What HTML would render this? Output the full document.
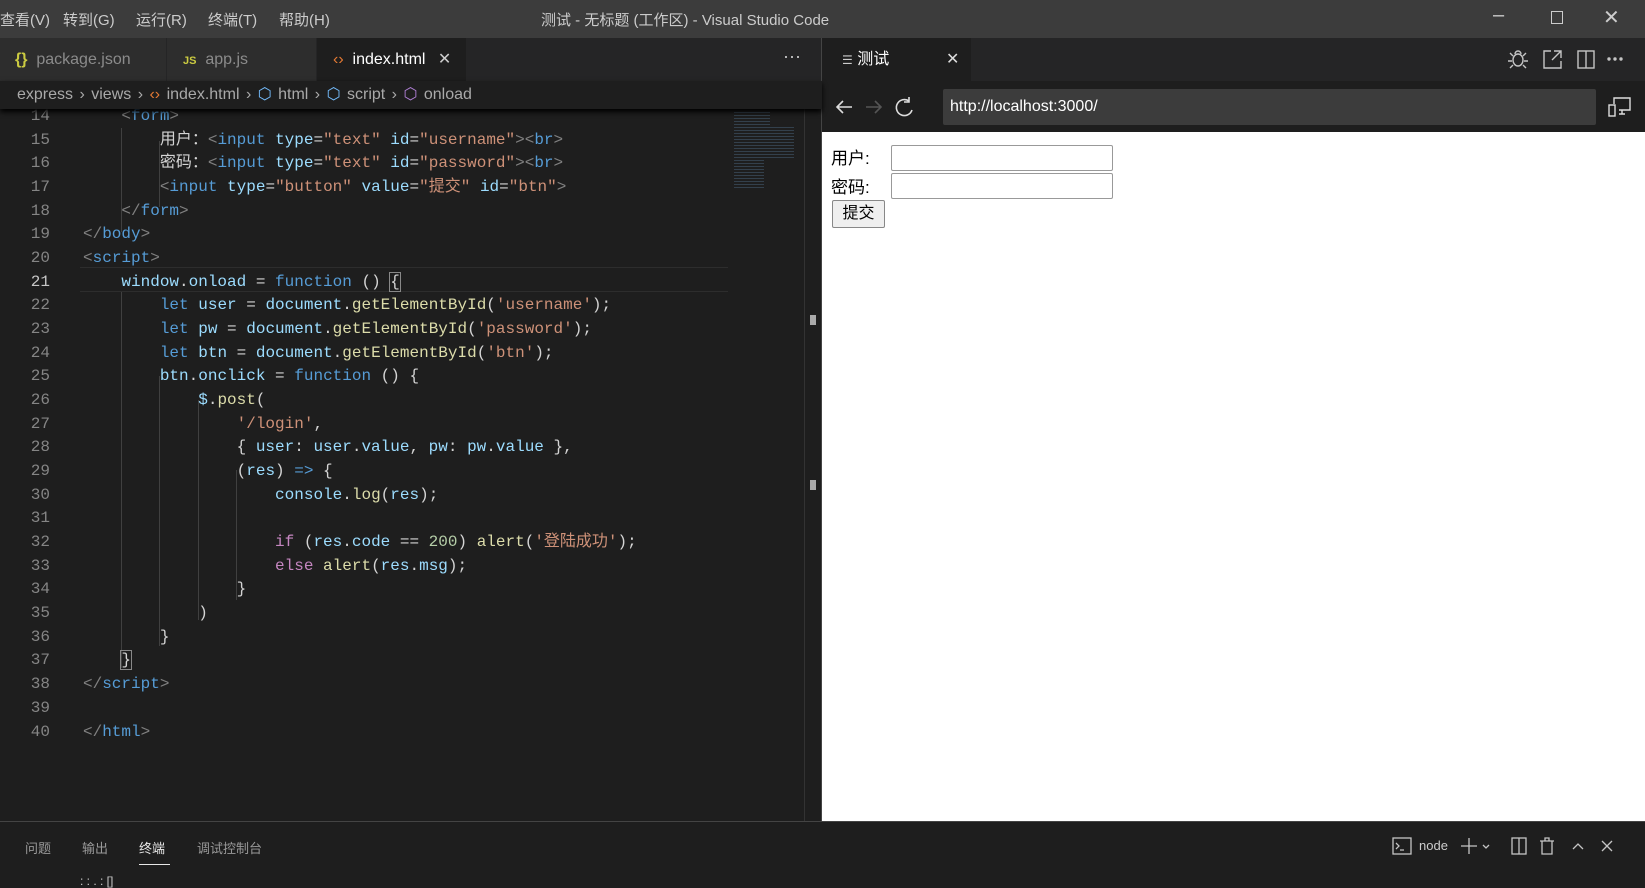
<!DOCTYPE html>
<html><head><meta charset="utf-8"><style>
*{margin:0;padding:0;box-sizing:border-box}
body{width:1645px;height:885px;overflow:hidden;background:#1e1e1e;font-family:"Liberation Sans","Noto Sans CJK SC",sans-serif;color:#ccc;position:relative}
.a{position:absolute}
#title{left:0;top:0;width:1645px;height:38px;background:#3c3c3c;font-size:15px;color:#ccc}
#title span{position:absolute;top:9px}
#tabs{left:0;top:38px;width:822px;height:43px;background:#252526}
.tab{position:absolute;top:0;height:43px;font-size:16px;line-height:43px}
#crumb{left:0;top:81px;width:822px;height:28px;background:#1e1e1e;font-size:16px;color:#a9a9a9;line-height:28px;box-shadow:0 3px 5px #000;z-index:2;word-spacing:2px}
.ln{position:absolute;width:50px;text-align:right;left:0;font-family:"Liberation Mono",monospace;font-size:16px;color:#858585;height:24px;line-height:24px}
.cl{position:absolute;left:83px;font-family:"Liberation Mono","Noto Sans CJK SC",monospace;font-size:16px;white-space:pre;color:#d4d4d4;height:24px;line-height:24px}
.t{color:#808080}.n{color:#569cd6}.at{color:#9cdcfe}.s{color:#ce9178}.f{color:#dcdcaa}.v{color:#9cdcfe}.k{color:#569cd6}.w{color:#d4d4d4}.nm{color:#b5cea8}
.g{position:absolute;width:1px;background:#404040}
</style></head><body>
<div id="title" class="a">
<span style="left:0">查看(V)</span><span style="left:63px">转到(G)</span><span style="left:136px">运行(R)</span><span style="left:208px">终端(T)</span><span style="left:279px">帮助(H)</span>
<span style="left:541px">测试 - 无标题 (工作区) - Visual Studio Code</span>
<span style="left:1493px;top:4px;font-size:20px">–</span>
<span style="left:1551px;top:11px;width:12px;height:13px;border:1.3px solid #ccc"></span>
<span style="left:1603px;top:5px;font-size:20px">✕</span>
</div>
<div id="tabs" class="a">
<div class="tab" style="left:0;width:166px;background:#2d2d2d;color:#8b8b8b"><span style="color:#cbcb41;margin-left:15px;font-weight:bold">{}</span>&nbsp; package.json</div>
<div class="tab" style="left:167px;width:149px;background:#2d2d2d;color:#8b8b8b"><span style="color:#cbcb41;margin-left:16px;font-size:11px;font-weight:bold">JS</span>&nbsp; app.js</div>
<div class="tab" style="left:317px;width:149px;background:#1e1e1e;color:#fff"><span style="color:#e37933;margin-left:16px">‹›</span>&nbsp; index.html <span style="margin-left:8px;color:#ccc">✕</span></div>
<div class="tab" style="left:783px;color:#ccc;font-size:18px;line-height:36px">···</div>
</div>
<div id="crumb" class="a"><span style="margin-left:17px">express › views › <span style="color:#e37933">‹›</span> index.html › <span style="color:#75beff">⬡</span> html › <span style="color:#75beff">⬡</span> script › <span style="color:#b180d7">⬡</span> onload</span></div>
<div class="a" style="left:0;top:109px;width:822px;height:712px;overflow:hidden">
<div style="position:absolute;top:-109px;left:0;width:822px;height:821px">
<div class="a" style="left:80px;top:267px;width:648px;height:25px;border-top:1px solid #2d2d2d;border-bottom:1px solid #2d2d2d"></div>
<div class="g" style="left:121px;top:128px;height:104px"></div>
<div class="g" style="left:159px;top:141px;height:66px"></div>
<div class="g" style="left:121px;top:292px;height:376px"></div>
<div class="g" style="left:159px;top:376px;height:270px"></div>
<div class="g" style="left:198px;top:400px;height:220px"></div>
<div class="g" style="left:236px;top:470px;height:130px"></div>
<div class="ln" style="top:104px">14</div><div class="cl" style="top:104px">    <span class="t">&lt;</span><span class="n">form</span><span class="t">&gt;</span></div>
<div class="ln" style="top:128px">15</div><div class="cl" style="top:128px">        用户：<span class="t">&lt;</span><span class="n">input</span> <span class="at">type</span>=<span class="s">"text"</span> <span class="at">id</span>=<span class="s">"username"</span><span class="t">&gt;&lt;</span><span class="n">br</span><span class="t">&gt;</span></div>
<div class="ln" style="top:151px">16</div><div class="cl" style="top:151px">        密码：<span class="t">&lt;</span><span class="n">input</span> <span class="at">type</span>=<span class="s">"text"</span> <span class="at">id</span>=<span class="s">"password"</span><span class="t">&gt;&lt;</span><span class="n">br</span><span class="t">&gt;</span></div>
<div class="ln" style="top:175px">17</div><div class="cl" style="top:175px">        <span class="t">&lt;</span><span class="n">input</span> <span class="at">type</span>=<span class="s">"button"</span> <span class="at">value</span>=<span class="s">"提交"</span> <span class="at">id</span>=<span class="s">"btn"</span><span class="t">&gt;</span></div>
<div class="ln" style="top:199px">18</div><div class="cl" style="top:199px">    <span class="t">&lt;/</span><span class="n">form</span><span class="t">&gt;</span></div>
<div class="ln" style="top:222px">19</div><div class="cl" style="top:222px"><span class="t">&lt;/</span><span class="n">body</span><span class="t">&gt;</span></div>
<div class="ln" style="top:246px">20</div><div class="cl" style="top:246px"><span class="t">&lt;</span><span class="n">script</span><span class="t">&gt;</span></div>
<div class="ln" style="top:270px;color:#c6c6c6">21</div><div class="cl" style="top:270px">    <span class="v">window</span>.<span class="v">onload</span> = <span class="k">function</span> () <span style="outline:1px solid #888">{</span></div>
<div class="ln" style="top:293px">22</div><div class="cl" style="top:293px">        <span class="k">let</span> <span class="v">user</span> = <span class="v">document</span>.<span class="f">getElementById</span>(<span class="s">'username'</span>);</div>
<div class="ln" style="top:317px">23</div><div class="cl" style="top:317px">        <span class="k">let</span> <span class="v">pw</span> = <span class="v">document</span>.<span class="f">getElementById</span>(<span class="s">'password'</span>);</div>
<div class="ln" style="top:341px">24</div><div class="cl" style="top:341px">        <span class="k">let</span> <span class="v">btn</span> = <span class="v">document</span>.<span class="f">getElementById</span>(<span class="s">'btn'</span>);</div>
<div class="ln" style="top:364px">25</div><div class="cl" style="top:364px">        <span class="v">btn</span>.<span class="v">onclick</span> = <span class="k">function</span> () {</div>
<div class="ln" style="top:388px">26</div><div class="cl" style="top:388px">            <span class="v">$</span>.<span class="f">post</span>(</div>
<div class="ln" style="top:412px">27</div><div class="cl" style="top:412px">                <span class="s">'/login'</span>,</div>
<div class="ln" style="top:435px">28</div><div class="cl" style="top:435px">                { <span class="v">user</span>: <span class="v">user</span>.<span class="v">value</span>, <span class="v">pw</span>: <span class="v">pw</span>.<span class="v">value</span> },</div>
<div class="ln" style="top:459px">29</div><div class="cl" style="top:459px">                (<span class="v">res</span>) <span class="k">=&gt;</span> {</div>
<div class="ln" style="top:483px">30</div><div class="cl" style="top:483px">                    <span class="v">console</span>.<span class="f">log</span>(<span class="v">res</span>);</div>
<div class="ln" style="top:506px">31</div>
<div class="ln" style="top:530px">32</div><div class="cl" style="top:530px">                    <span style="color:#c586c0">if</span> (<span class="v">res</span>.<span class="v">code</span> == <span class="nm">200</span>) <span class="f">alert</span>(<span class="s">'登陆成功'</span>);</div>
<div class="ln" style="top:554px">33</div><div class="cl" style="top:554px">                    <span style="color:#c586c0">else</span> <span class="f">alert</span>(<span class="v">res</span>.<span class="v">msg</span>);</div>
<div class="ln" style="top:577px">34</div><div class="cl" style="top:577px">                }</div>
<div class="ln" style="top:601px">35</div><div class="cl" style="top:601px">            )</div>
<div class="ln" style="top:625px">36</div><div class="cl" style="top:625px">        }</div>
<div class="ln" style="top:648px">37</div><div class="cl" style="top:648px">    <span style="outline:1px solid #888">}</span></div>
<div class="ln" style="top:672px">38</div><div class="cl" style="top:672px"><span class="t">&lt;/</span><span class="n">script</span><span class="t">&gt;</span></div>
<div class="ln" style="top:696px">39</div>
<div class="ln" style="top:720px">40</div><div class="cl" style="top:720px"><span class="t">&lt;/</span><span class="n">html</span><span class="t">&gt;</span></div>
</div></div>
<div class="a" style="left:734px;top:110px;width:60px;height:80px;opacity:.35;background:repeating-linear-gradient(#1e1e1e 0 2px,#5a7fa0 2px 3px);clip-path:polygon(0 0,60% 0,60% 20%,100% 20%,100% 60%,50% 60%,50% 100%,0 100%)"></div>
<div class="a" style="left:804px;top:109px;width:1px;height:712px;background:#333"></div>
<div class="a" style="left:810px;top:315px;width:6px;height:10px;background:#aaa"></div>
<div class="a" style="left:810px;top:480px;width:6px;height:10px;background:#aaa"></div>
<div class="a" style="left:821px;top:38px;width:1px;height:783px;background:#444"></div>
<div class="a" style="left:822px;top:38px;width:823px;height:43px;background:#252526"></div>
<div class="a" style="left:822px;top:38px;width:149px;height:43px;background:#1e1e1e;color:#fff;font-size:16px;line-height:43px"><span style="margin-left:20px;font-size:12px;color:#ccc">☰</span> 测试<span style="position:absolute;left:124px;color:#ddd">✕</span></div>
<svg class="a" style="left:1505px;top:47px" width="130" height="24" viewBox="0 0 130 24" fill="none" stroke="#c5c5c5" stroke-width="1.4">
<ellipse cx="13" cy="13" rx="5" ry="6"/><path d="M8 9l-3-3M18 9l3-3M7 14H3M19 14h4M8 18l-3 3M18 18l3 3M10 7a3 3 0 0 1 6 0"/>
<path d="M46 4h-7v17h17v-7M49 4h7v7M56 4l-9 9"/>
<rect x="73" y="4" width="16" height="17"/><path d="M81 4v17"/>
<circle cx="104" cy="12" r="1" fill="#c5c5c5"/><circle cx="110" cy="12" r="1" fill="#c5c5c5"/><circle cx="116" cy="12" r="1" fill="#c5c5c5"/>
</svg>
<div class="a" style="left:822px;top:81px;width:823px;height:51px;background:#1e1e1e"></div>
<svg class="a" style="left:830px;top:92px" width="110" height="30" viewBox="0 0 110 30" fill="none" stroke-width="1.6">
<path d="M22 15H7M13 9l-6 6 6 6" stroke="#ddd"/><path d="M36 15h15M45 9l6 6-6 6" stroke="#555"/>
<path d="M79 9a8 8 0 1 0 3 9M79 5v5h-5" stroke="#ddd"/>
</svg>
<div class="a" style="left:943px;top:89px;width:653px;height:36px;background:#3c3c3c;border-radius:2px;color:#fff;font-size:16px;line-height:36px;padding-left:7px">http://localhost:3000/</div>
<svg class="a" style="left:1608px;top:96px" width="24" height="22" viewBox="0 0 24 22" fill="none" stroke="#ddd" stroke-width="1.4"><path d="M6 8V2h16v12H11M14 14v4M11 18h6"/><rect x="1" y="9" width="6" height="11"/></svg>
<div class="a" style="left:822px;top:132px;width:823px;height:689px;background:#fff;color:#000;font-family:'Liberation Sans','Noto Sans CJK SC',sans-serif;font-size:17px">
<div class="a" style="left:9px;top:12px">用户:</div><div class="a" style="left:69px;top:13px;width:222px;height:26px;border:1px solid #999;border-radius:2px"></div>
<div class="a" style="left:9px;top:41px">密码:</div><div class="a" style="left:69px;top:41px;width:222px;height:26px;border:1px solid #999;border-radius:2px"></div>
<div class="a" style="left:10px;top:68px;width:53px;height:28px;border:1px solid #888;border-radius:2px;background:#efefef;font-size:16px;text-align:center;line-height:26px">提交</div>
</div>
<div class="a" style="left:0;top:821px;width:1645px;height:64px;background:#1e1e1e;border-top:1px solid #444;font-size:13px;color:#999">
<span class="a" style="left:25px;top:16px">问题</span><span class="a" style="left:82px;top:16px">输出</span><span class="a" style="left:139px;top:16px;color:#e7e7e7">终端</span><span class="a" style="left:197px;top:16px">调试控制台</span>
<div class="a" style="left:139px;top:42px;width:31px;height:1px;background:#e7e7e7"></div>
<span class="a" style="left:80px;top:52px;color:#ccc;font-size:12px">: : . : []</span>
<svg class="a" style="left:1390px;top:13px" width="250" height="22" viewBox="0 0 250 22" fill="none" stroke="#c5c5c5" stroke-width="1.3"><rect x="3" y="3" width="18" height="16"/><path d="M6 8l3 3-3 3M10 15h4"/>
<path d="M79 3v16M71 11h16M93 10l3 3 3-3"/><rect x="122" y="3" width="14" height="16"/><path d="M129 3v16"/>
<path d="M150 6h14M155 6V3h4v3M152 6v13h10V6"/><path d="M183 14l5-5 5 5"/><path d="M212 6l10 10M222 6l-10 10"/></svg>
<span class="a" style="left:1419px;top:16px;color:#ccc">node</span>
</div>
</body></html>
